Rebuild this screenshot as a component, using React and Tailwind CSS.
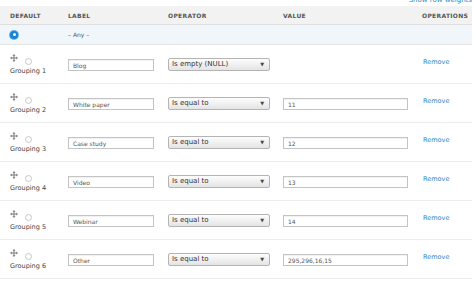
import React from "react";

const rows = [
  { name: "Grouping 1", label: "Blog", op: "Is empty (NULL)", value: null },
  { name: "Grouping 2", label: "White paper", op: "Is equal to", value: "11" },
  { name: "Grouping 3", label: "Case study", op: "Is equal to", value: "12" },
  { name: "Grouping 4", label: "Video", op: "Is equal to", value: "13" },
  { name: "Grouping 5", label: "Webinar", op: "Is equal to", value: "14" },
  { name: "Grouping 6", label: "Other", op: "Is equal to", value: "295,296,16,15" },
];

function DragIcon() {
  return (
    <svg width="8" height="8" viewBox="0 0 16 16" className="text-[#7a7a7a]">
      <path d="M8 0 L11 3.5 H9 V7 H12.5 V5 L16 8 L12.5 11 V9 H9 V12.5 H11 L8 16 L5 12.5 H7 V9 H3.5 V11 L0 8 L3.5 5 V7 H7 V3.5 H5 Z" fill="currentColor" />
    </svg>
  );
}

function Radio({ checked }) {
  if (checked) {
    return (
      <span className="flex h-[8px] w-[8px] items-center justify-center rounded-full bg-[#1a82d6] shadow-[0_0_0_1px_#6ab0e8]">
        <span className="h-[3px] w-[3px] rounded-full bg-white" />
      </span>
    );
  }
  return <span className="block h-[7px] w-[7px] rounded-full border border-[#c8c8c8] bg-white" />;
}

function Select({ text }) {
  return (
    <div className="flex h-[13px] w-[102px] items-center justify-between rounded-[2px] border border-[#b4b4b4] bg-gradient-to-b from-[#fdfdfd] to-[#e4e4e4] pl-[3px] pr-[5px] text-[7px] text-[#333]">
      <span>{text}</span>
      <span className="text-[5px] text-[#444]">▼</span>
    </div>
  );
}

function Input({ text, w }) {
  return (
    <div className={`flex h-[12px] items-center border border-[#c4c4c4] bg-white pl-[4px] text-[6px] text-[#555] shadow-[inset_0_1px_1px_rgba(0,0,0,0.06)] ${w}`}>
      {text}
    </div>
  );
}

export default function App() {
  return (
    <div className="h-[281px] w-[474px] overflow-hidden bg-white font-['DejaVu_Sans',sans-serif] text-[#333]">
      <div className="-mt-[4px] flex h-[10px] justify-end pr-[2px] text-[7px] leading-[9px] text-[#2b84c6]">Show row weights</div>
      <div className="w-[472px]">
        <div className="grid h-[19px] grid-cols-[58px_100px_115px_139px_1fr] items-center border-b border-[#dedede] bg-[#f2f2f2] pl-[10px] text-[6px] font-bold tracking-[0.3px] text-[#555]">
          <div>DEFAULT</div>
          <div>LABEL</div>
          <div>OPERATOR</div>
          <div>VALUE</div>
          <div>OPERATIONS</div>
        </div>
        <div className="grid h-[20px] grid-cols-[58px_100px_115px_139px_1fr] items-center border-b border-[#e6e6e6] bg-[#f1f6fb] pl-[10px] text-[6px] text-[#555]">
          <div>
            <Radio checked />
          </div>
          <div>– Any –</div>
        </div>
        {rows.map((r) => (
          <div
            key={r.name}
            className="grid h-[39px] grid-cols-[58px_100px_115px_139px_1fr] items-center border-b border-[#ececec] pl-[10px]"
          >
            <div className="flex flex-col pt-[2px]">
              <div className="flex items-start gap-[7px]">
                <DragIcon />
                <div className="mt-[4px]">
                  <Radio />
                </div>
              </div>
              <div className="mt-[2px] text-[6.5px] text-[#444]">{r.name}</div>
            </div>
            <div className="pt-[2px]">
              <Input text={r.label} w="w-[86px]" />
            </div>
            <div className="pt-[1px]">
              <Select text={r.op} />
            </div>
            <div className="pt-[2px]">
              {r.value !== null && <Input text={r.value} w="w-[125px]" />}
            </div>
            <div className="-mt-[2px] pl-[1px] text-[6.5px] text-[#2b7fc0]">Remove</div>
          </div>
        ))}
      </div>
    </div>
  );
}
